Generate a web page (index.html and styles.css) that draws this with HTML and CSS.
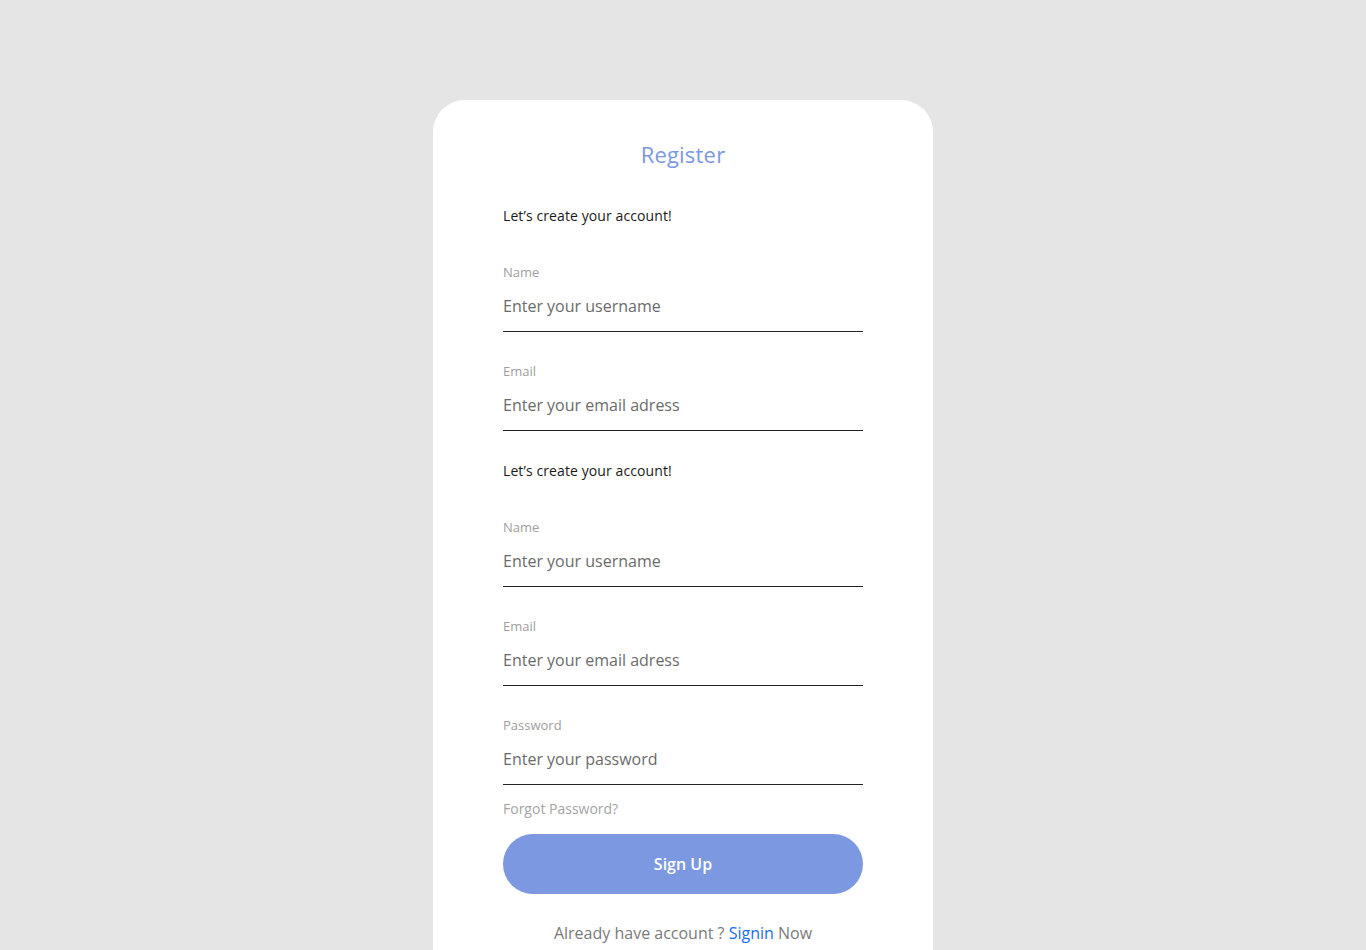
FILE: index.html
```html
<!DOCTYPE html>
<html lang="en">
<head>
<meta charset="utf-8">
<title>Register</title>
<link rel="stylesheet" href="styles.css">
</head>
<body>
<main class="card">
  <h1 class="title">Register</h1>
  <form class="form">
    <p class="intro">Let’s create your account!</p>
    <div class="field">
      <label class="label">Name</label>
      <input class="input" type="text" placeholder="Enter your username">
    </div>
    <div class="field">
      <label class="label">Email</label>
      <input class="input" type="email" placeholder="Enter your email adress">
    </div>
    <p class="intro">Let’s create your account!</p>
    <div class="field">
      <label class="label">Name</label>
      <input class="input" type="text" placeholder="Enter your username">
    </div>
    <div class="field">
      <label class="label">Email</label>
      <input class="input" type="email" placeholder="Enter your email adress">
    </div>
    <div class="field field-last">
      <label class="label">Password</label>
      <input class="input" type="password" placeholder="Enter your password">
    </div>
    <a class="forgot" href="#">Forgot Password?</a>
    <button class="btn" type="button">Sign Up</button>
    <p class="footer">Already have account ? <a class="link" href="#">Signin</a> Now</p>
  </form>
</main>
</body>
</html>
```

FILE: styles.css
```css
* { box-sizing: border-box; }
html, body { margin: 0; padding: 0; }
body {
  background: #e5e5e5;
  font-family: "Open Sans", "Noto Sans", sans-serif;
  height: 950px;
  overflow: hidden;
}
.card {
  width: 500px;
  margin: 100px auto 0;
  background: #fff;
  border-radius: 32px 32px 0 0;
  padding: 40px 70px 5px;
  min-height: 850px;
}
.title {
  margin: 0;
  text-align: center;
  font-size: 22px;
  line-height: 28px;
  font-weight: 400;
  color: #7b98e0;
  letter-spacing: 0.2px;
}
.form { display: flex; flex-direction: column; }
.intro {
  margin: 0 0 37px;
  font-size: 14px;
  line-height: 20px;
  color: #1a1a1a;
  letter-spacing: 0.1px;
}
.title + .form .intro:first-child { margin-top: 38px; }
.field + .intro { margin-top: 30px; }
.field { display: flex; flex-direction: column; }
.field + .field { margin-top: 30px; }
.label {
  font-size: 13px;
  line-height: 18px;
  color: #9e9e9e;
  margin-bottom: 4px;
}
.input {
  font-family: inherit;
  font-size: 16px;
  line-height: 24px;
  height: 47px;
  padding: 9px 0 13px;
  border: 0;
  border-bottom: 1px solid #222;
  outline: none;
  background: transparent;
  color: #333;
}
.input::placeholder { color: #6b6b6b; opacity: 1; }
.forgot {
  margin-top: 14px;
  font-size: 14px;
  line-height: 20px;
  color: #a3a3a3;
  text-decoration: none;
}
.btn {
  margin-top: 15px;
  height: 60px;
  border: 0;
  border-radius: 30px;
  background: #7b98e0;
  color: #fff;
  font-family: inherit;
  font-size: 16px;
  font-weight: 600;
}
.footer {
  margin: 27px 0 0;
  text-align: center;
  font-size: 16px;
  line-height: 24px;
  color: #7a7a7a;
}
.link { color: #1a6ef0; text-decoration: none; }
```
